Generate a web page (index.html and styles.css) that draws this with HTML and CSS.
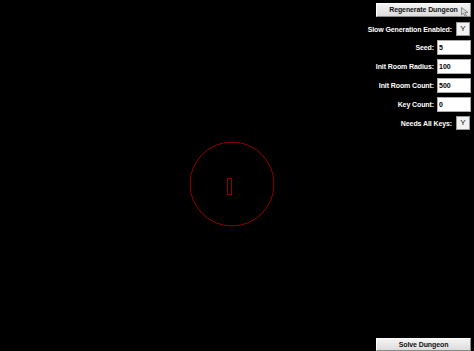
FILE: index.html
```html
<!DOCTYPE html>
<html lang="en">
<head>
    <meta charset="UTF-8">
    <title>Dungeon Generator</title>
    <link rel="stylesheet" href="styles.css">
</head>
<body>
    <div class="stage">
        <svg class="canvas" width="474" height="351">
            <circle cx="232" cy="184" r="42" fill="none" stroke="#8e0000" stroke-width="1"/>
            <rect x="227.5" y="178.5" width="4" height="16" fill="none" stroke="#8e0000" stroke-width="1"/>
        </svg>

        <div class="panel">
            <button class="btn btn-wide">
                Regenerate Dungeon
                <svg class="cursor" width="8" height="10" viewBox="0 0 8 10">
                    <path d="M0.5 0.5 L0.5 8 L2.5 6 L4 9.5 L5.5 9 L4 5.5 L7 5.5 Z" fill="#d8d8d8" stroke="#777" stroke-width="0.8"/>
                </svg>
            </button>

            <div class="row">
                <span class="label">Slow Generation Enabled:</span>
                <button class="toggle">Y</button>
            </div>
            <div class="row row-tight">
                <span class="label">Seed:</span>
                <input class="field" type="text" value="5">
            </div>
            <div class="row">
                <span class="label">Init Room Radius:</span>
                <input class="field" type="text" value="100">
            </div>
            <div class="row">
                <span class="label">Init Room Count:</span>
                <input class="field" type="text" value="500">
            </div>
            <div class="row">
                <span class="label">Key Count:</span>
                <input class="field" type="text" value="0">
            </div>
            <div class="row">
                <span class="label">Needs All Keys:</span>
                <button class="toggle">Y</button>
            </div>

            <button class="btn btn-wide btn-bottom">Solve Dungeon</button>
        </div>
    </div>
</body>
</html>
```

FILE: styles.css
```css
body {
    margin: 0;
    background: #000;
    font-family: 'Liberation Sans', Arial, sans-serif;
    overflow: hidden;
}

.stage {
    position: relative;
    width: 474px;
    height: 351px;
}

.canvas {
    position: absolute;
    left: 0;
    top: 0;
}

.panel {
    position: relative;
    height: 351px;
    display: flex;
    flex-direction: column;
    align-items: flex-end;
    padding: 3px 3px 0 0;
    box-sizing: border-box;
}

.btn {
    position: relative;
    background: linear-gradient(#f4f4f4, #dcdcdc);
    border: 1px solid #fff;
    border-right-color: #888;
    border-bottom-color: #888;
    font-family: 'Liberation Sans', Arial, sans-serif;
    font-size: 7px;
    font-weight: bold;
    letter-spacing: -0.1px;
    color: #111;
    padding: 0;
    margin: 0;
    height: 14px;
    line-height: 12px;
}

.btn-wide {
    width: 95px;
}

.btn-bottom {
    margin-top: auto;
    height: 13px;
}

.cursor {
    position: absolute;
    right: 1px;
    top: 3px;
}

.row {
    display: flex;
    align-items: center;
    gap: 3px;
    margin-top: 5px;
    height: 14px;
}

.row-tight {
    margin-top: 4px;
}

.label {
    color: #fff;
    font-size: 7px;
    font-weight: bold;
    letter-spacing: -0.1px;
    white-space: nowrap;
}

.toggle {
    width: 14px;
    height: 14px;
    margin: 0 1px 0 1px;
    padding: 0;
    background: #f2f2f2;
    border: 1px solid #999;
    font-family: 'Liberation Sans', Arial, sans-serif;
    font-size: 8px;
    color: #111;
    line-height: 12px;
}

.field {
    width: 34px;
    height: 15px;
    box-sizing: border-box;
    margin: 0;
    padding: 0 1px;
    border: 1px solid #aaa;
    background: #fff;
    font-family: 'Liberation Sans', Arial, sans-serif;
    font-size: 7px;
    font-weight: bold;
    color: #000;
    vertical-align: top;
}
```
